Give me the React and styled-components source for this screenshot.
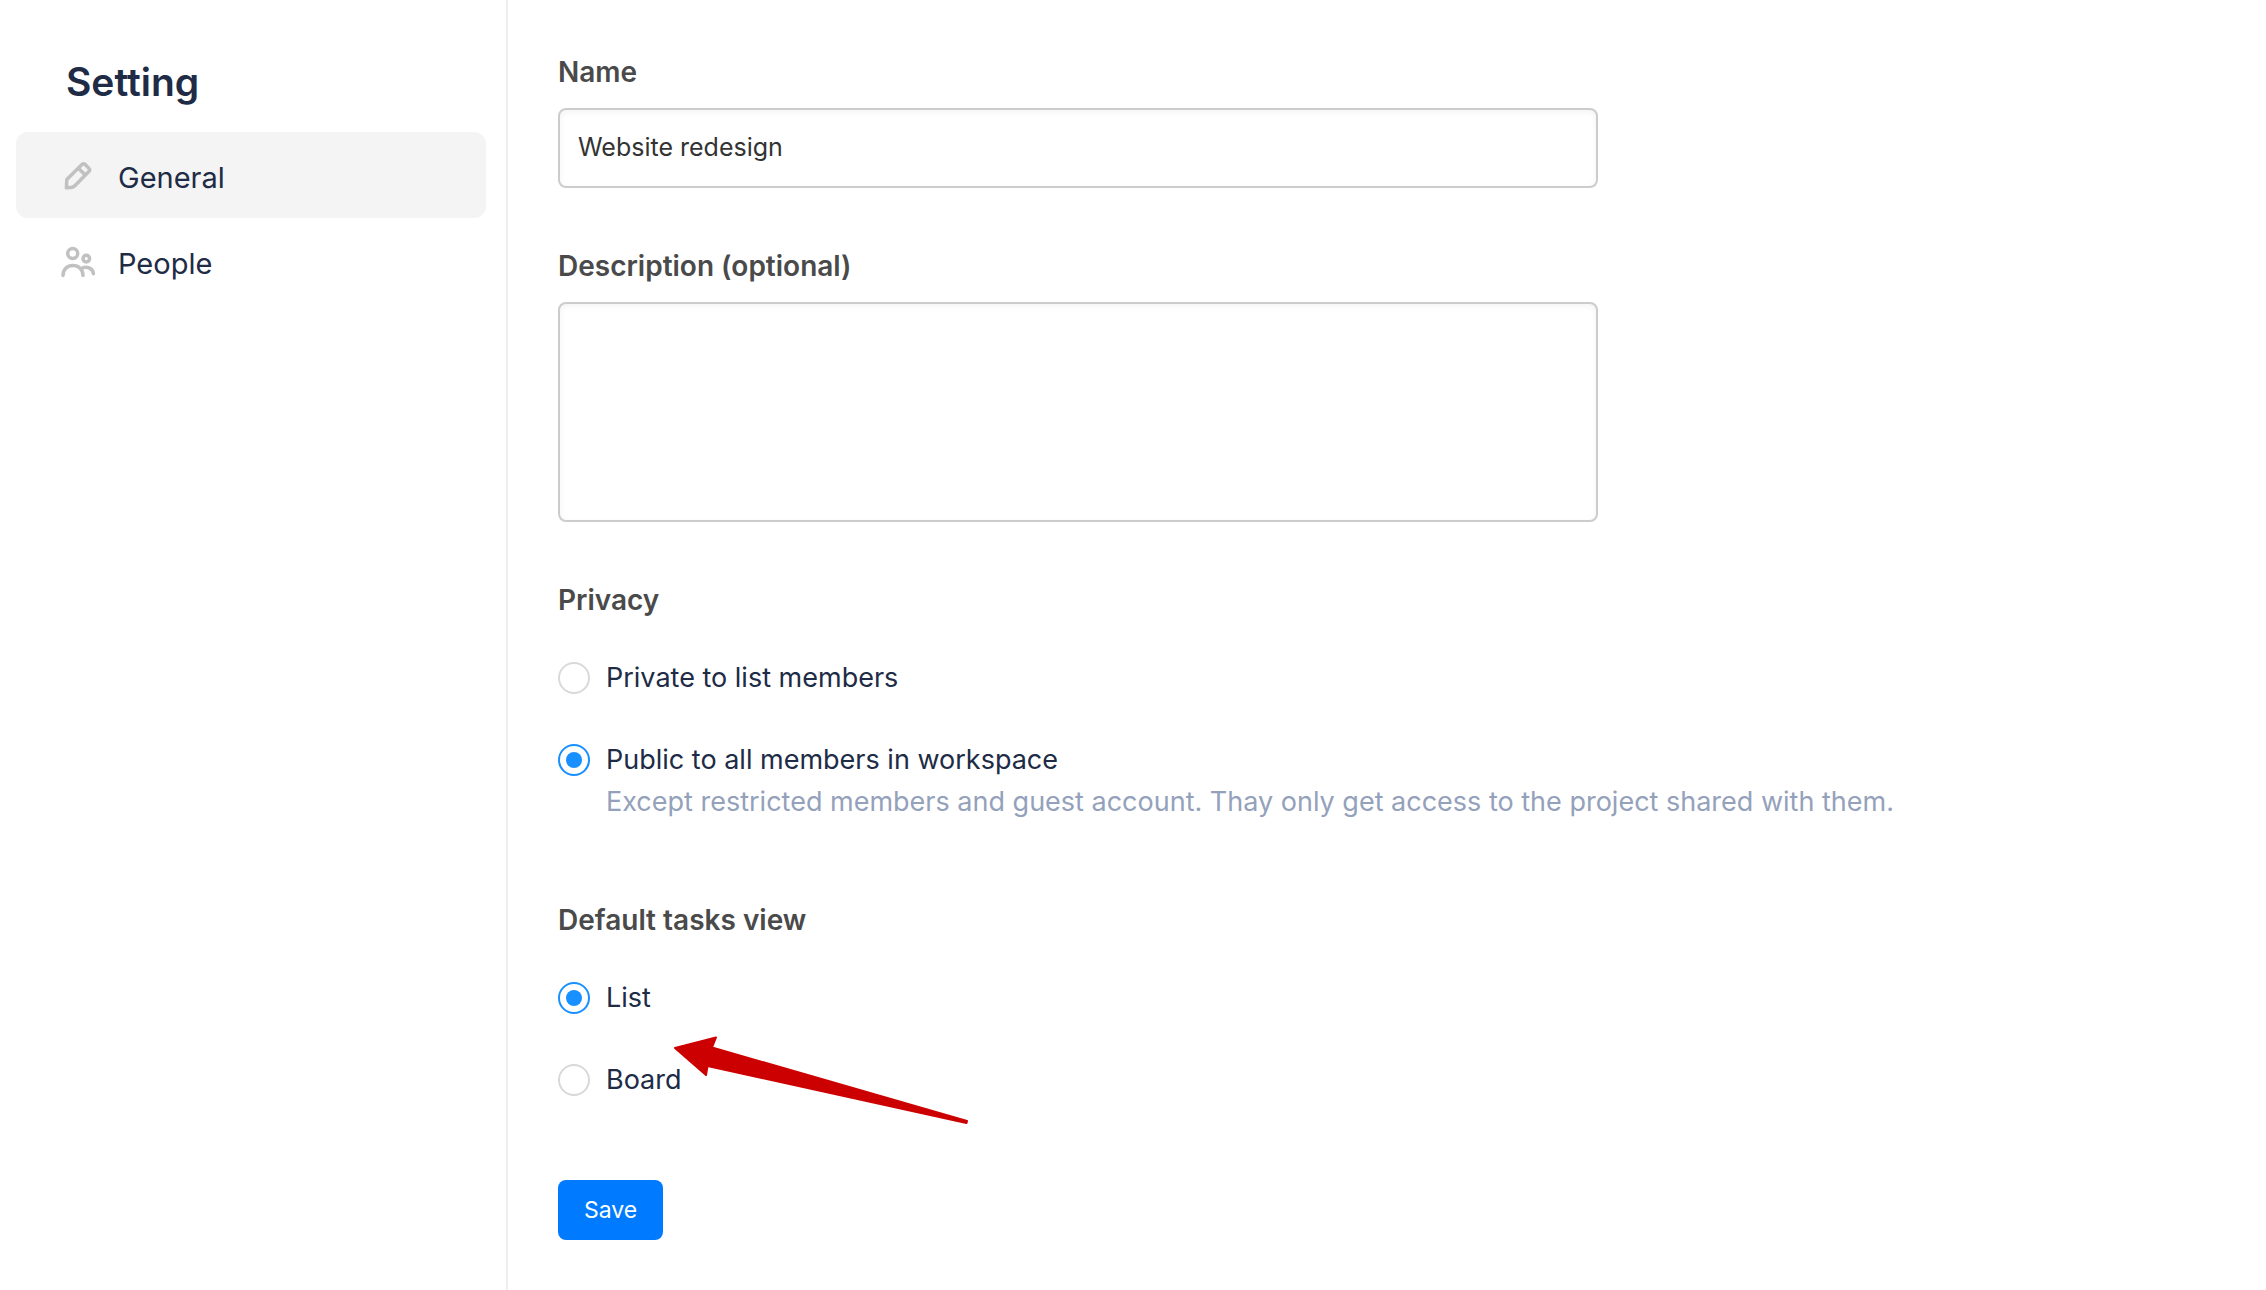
import { useState } from 'react';
import styled, { createGlobalStyle } from 'styled-components';

const GlobalStyle = createGlobalStyle`
  * {
    box-sizing: border-box;
  }

  body {
    margin: 0;
    background: #fff;
    color: #202b46;
    font-family: Inter, 'Liberation Sans', sans-serif;
    font-size: 27px;
    line-height: 36px;
  }

  button, input, textarea {
    font-family: inherit;
  }
`;

const PencilIcon = () => (
  <Icon viewBox="0 3 36 36" aria-hidden="true">
    <path d="M6.4 30.8 6.8 22.6 22.2 7.3Q23.6 6.1 25 7.3L29.1 11.6Q30.3 13 29.1 14.2L14.6 28.9Q13 30.3 11 30.4Z" />
    <path d="M18.6 11.4 24.8 17.6" />
  </Icon>
);

const PeopleIcon = () => (
  <Icon viewBox="0 3 36 36" aria-hidden="true">
    <circle cx="12.7" cy="10.4" r="5" />
    <circle cx="26.3" cy="15.6" r="3.3" />
    <path d="M3 32.6C3 26.6 7.2 22.6 12.9 22.6S23 26.6 23 32.6" />
    <path d="M21.4 25.6C27 22.6 33.4 25.4 33.4 30.8" />
  </Icon>
);

const Option = ({ name, value, current, onChange, label, hint }) => (
  <OptionLabel>
    <Radio
      type="radio"
      name={name}
      value={value}
      checked={current === value}
      onChange={() => onChange(value)}
    />
    <OptionText>
      <span>{label}</span>
      {hint && <Hint>{hint}</Hint>}
    </OptionText>
  </OptionLabel>
);

export default function App() {
  const [name, setName] = useState('Website redesign');
  const [description, setDescription] = useState('');
  const [privacy, setPrivacy] = useState('public');
  const [view, setView] = useState('list');

  return (
    <Page>
      <GlobalStyle />
      <Sidebar>
        <Title>Setting</Title>
        <nav>
          <NavLink href="#general" $active>
            <PencilIcon />
            General
          </NavLink>
          <NavLink href="#people">
            <PeopleIcon />
            People
          </NavLink>
        </nav>
      </Sidebar>

      <Form onSubmit={(e) => e.preventDefault()}>
        <Field>
          <FieldLabel htmlFor="name">Name</FieldLabel>
          <TextInput id="name" value={name} onChange={(e) => setName(e.target.value)} />
        </Field>
        <Field>
          <FieldLabel htmlFor="description">Description (optional)</FieldLabel>
          <TextArea
            id="description"
            value={description}
            onChange={(e) => setDescription(e.target.value)}
          />
        </Field>

        <Group role="radiogroup" aria-labelledby="privacy-title">
          <GroupTitle id="privacy-title">Privacy</GroupTitle>
          <Options>
            <Option
              name="privacy"
              value="private"
              current={privacy}
              onChange={setPrivacy}
              label="Private to list members"
            />
            <Option
              name="privacy"
              value="public"
              current={privacy}
              onChange={setPrivacy}
              label="Public to all members in workspace"
              hint="Except restricted members and guest account. Thay only get access to the project shared with them."
            />
          </Options>
        </Group>

        <Group role="radiogroup" aria-labelledby="view-title">
          <GroupTitle id="view-title">Default tasks view</GroupTitle>
          <Options>
            <Option name="view" value="list" current={view} onChange={setView} label="List" />
            <Option name="view" value="board" current={view} onChange={setView} label="Board" />
            <Arrow viewBox="0 0 296 90" aria-hidden="true">
              <path d="M2 13 43 2.500 39 12.500 294 86 293.500 88 34.500 31 33 40Z" />
            </Arrow>
          </Options>
        </Group>

        <SaveButton type="submit">Save</SaveButton>
      </Form>
    </Page>
  );
}

const Page = styled.div`
  display: flex;
  min-height: 100vh;
`;

const Sidebar = styled.aside`
  flex: 0 0 508px;
  padding: 58px 20px 0 16px;
  border-right: 2px solid #eee;
`;

const Title = styled.h1`
  margin: 0 0 26px;
  padding-left: 50px;
  font-size: 39px;
  font-weight: 600;
  line-height: 48px;
`;

const NavLink = styled.a`
  display: flex;
  align-items: center;
  gap: 22px;
  height: 86px;
  padding: 6px 44px 0;
  border-radius: 12px;
  background: ${({ $active }) => ($active ? '#f4f4f4' : 'transparent')};
  color: inherit;
  font-size: 29px;
  text-decoration: none;
`;

const Icon = styled.svg`
  width: 36px;
  height: 36px;
  fill: none;
  stroke: #c1c1c1;
  stroke-width: 3.5;
  stroke-linecap: round;
  stroke-linejoin: round;
`;

const Form = styled.form`
  flex: 1;
  min-width: 0;
  padding: 54px 50px;
`;

const Field = styled.div`
  display: flex;
  flex-direction: column;
  gap: 18px;
  max-width: 1040px;
  margin-bottom: 60px;
`;

const FieldLabel = styled.label`
  color: #4a4a4a;
  font-size: 28px;
  font-weight: 600;
`;

const TextInput = styled.input`
  height: 80px;
  padding: 0 18px 2px;
  border: 2px solid #ccc;
  border-radius: 8px;
  background: #fff;
  box-shadow: inset 0 2px 6px rgba(0, 0, 0, 0.05);
  color: #333;
  font-size: 25px;
  outline: none;
`;

const TextArea = styled(TextInput).attrs({ as: 'textarea' })`
  height: 220px;
  padding: 16px 18px;
  resize: none;
`;

const Group = styled.div`
  margin-bottom: 82px;
`;

const GroupTitle = styled.h2`
  margin: 0 0 42px;
  color: #4a4a4a;
  font-size: 28px;
  font-weight: 600;
  line-height: 36px;
`;

const Options = styled.div`
  position: relative;
  display: flex;
  flex-direction: column;
  align-items: flex-start;
  gap: 46px;
`;

const OptionLabel = styled.label`
  display: flex;
  gap: 16px;
  cursor: pointer;
`;

const Radio = styled.input`
  appearance: none;
  flex: none;
  display: grid;
  place-items: center;
  width: 32px;
  height: 32px;
  margin: 2px 0;
  border: 2px solid #d9d9d9;
  border-radius: 50%;
  background: #fff;
  cursor: pointer;

  &:checked {
    border-color: #1890ff;
  }

  &:checked::before {
    content: '';
    width: 16px;
    height: 16px;
    border-radius: 50%;
    background: #1890ff;
  }
`;

const OptionText = styled.span`
  display: flex;
  flex-direction: column;
  gap: 6px;
`;

const Hint = styled.span`
  color: #94a1bb;
`;

/* Callout drawn over the options, pointing at the first one */
const Arrow = styled.svg`
  position: absolute;
  top: 55px;
  left: 115px;
  width: 296px;
  height: 90px;
  fill: #cc0000;
  stroke: #cc0000;
  stroke-width: 2;
  stroke-linejoin: round;
  pointer-events: none;
`;

const SaveButton = styled.button`
  height: 60px;
  padding: 0 26px;
  border: 0;
  border-radius: 8px;
  background: #007bff;
  color: #fff;
  font-size: 23px;
  cursor: pointer;
`;
